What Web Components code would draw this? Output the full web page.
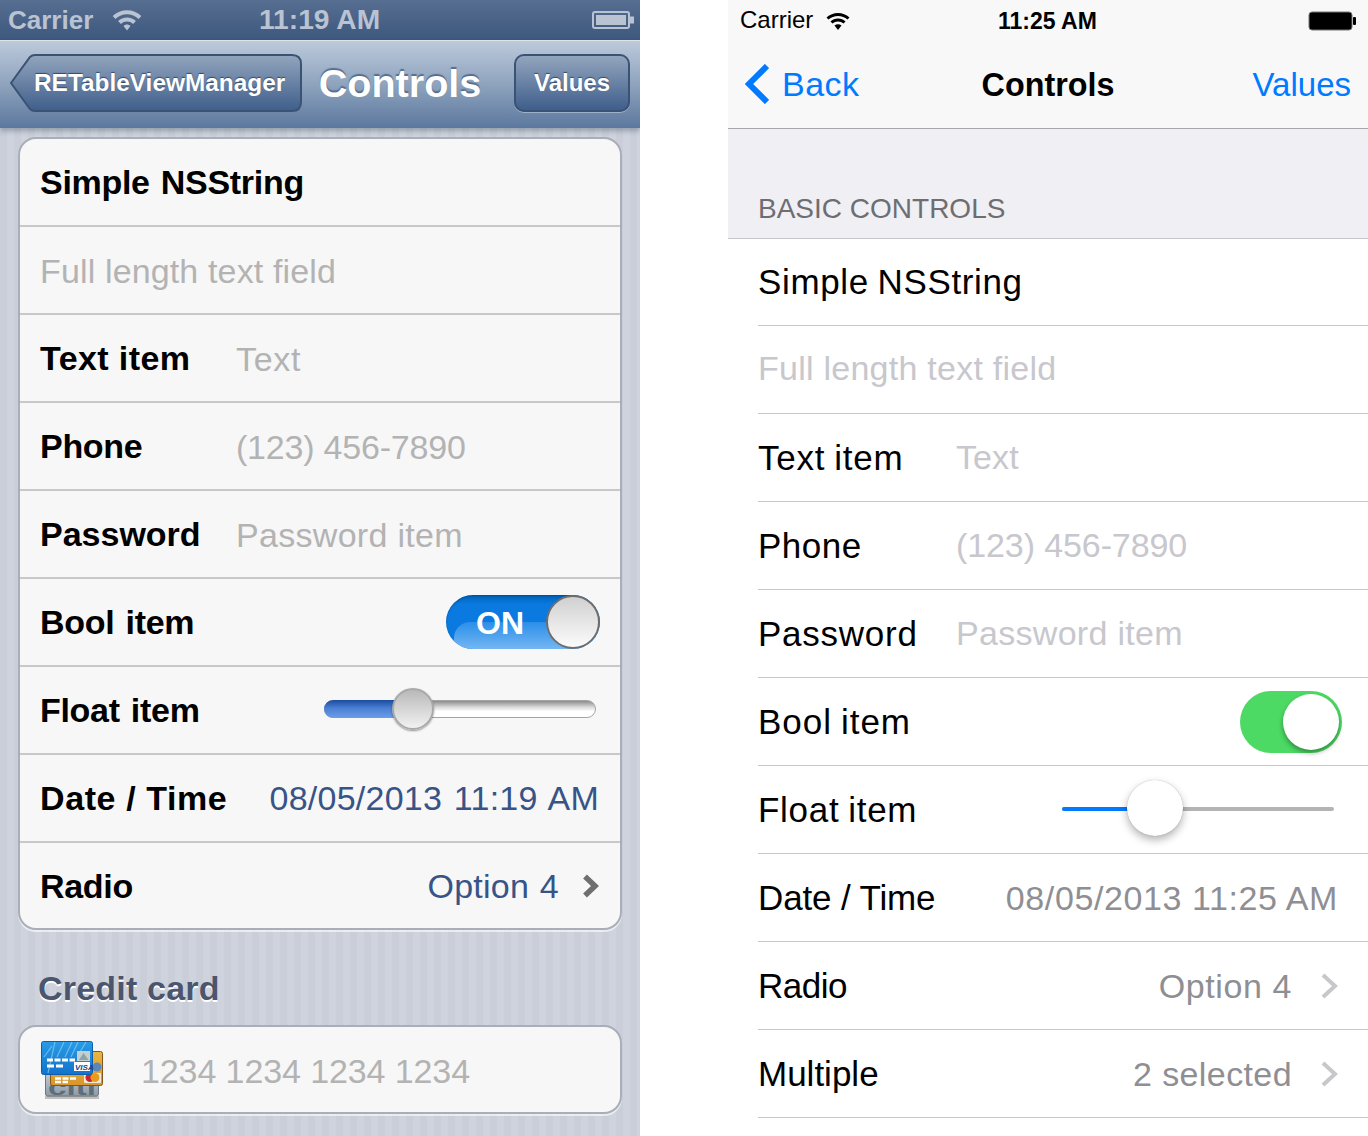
<!DOCTYPE html>
<html>
<head>
<meta charset="utf-8">
<title>Controls</title>
<style>
    html, body { margin: 0; padding: 0; background: #fff; }
    body {
        width: 1368px;
        height: 1136px;
        overflow: hidden;
        display: flex;
        justify-content: space-between;
        font-family: "Liberation Sans", Arial, sans-serif;
    }
</style>
</head>
<body>

<old-phone>
    <old-status slot="top"></old-status>
    <old-nav slot="top"></old-nav>
    <old-group>
        <old-row label="Simple NSString"></old-row>
        <old-row placeholder="Full length text field" style="--ph: .14px"></old-row>
        <old-row label="Text item" placeholder="Text" style="--ls: .4px; --ws: 0; --ph: .7px"></old-row>
        <old-row label="Phone" placeholder="(123) 456-7890" style="--ph: -.2px"></old-row>
        <old-row label="Password" placeholder="Password item" style="--ls: 0; --ph: .3px"></old-row>
        <old-row label="Bool item"><old-switch></old-switch></old-row>
        <old-row label="Float item"><old-slider></old-slider></old-row>
        <old-row label="Date / Time" value="08/05/2013 11:19 AM" style="--ls: .6px; --ws: 0; --vws: 2px"></old-row>
        <old-row label="Radio" value="Option 4" chevron></old-row>
    </old-group>
    <old-header>Credit card</old-header>
    <old-group>
        <old-row card placeholder="1234 1234 1234 1234" style="--ph: -.1px"></old-row>
    </old-group>
</old-phone>

<new-phone>
    <new-status slot="top"></new-status>
    <new-nav slot="top"></new-nav>
    <new-header>BASIC CONTROLS</new-header>
    <new-group>
        <new-row label="Simple NSString" style="--ls: .63px"></new-row>
        <new-row placeholder="Full length text field" style="--ph: .25px; --ph-lift: 4px"></new-row>
        <new-row label="Text item" placeholder="Text" style="--ls: .75px"></new-row>
        <new-row label="Phone" placeholder="(123) 456-7890" style="--ph: -.1px"></new-row>
        <new-row label="Password" placeholder="Password item" style="--ls: .75px; --ph: .3px"></new-row>
        <new-row label="Bool item" style="--ls: .95px"><new-switch></new-switch></new-row>
        <new-row label="Float item" style="--ls: .7px"><new-slider></new-slider></new-row>
        <new-row label="Date / Time" value="08/05/2013 11:25 AM" style="--ls: -.14px; --ws: 0"></new-row>
        <new-row label="Radio" value="Option 4" chevron style="--ls: -.5px"></new-row>
        <new-row label="Multiple" value="2 selected" chevron style="--ls: 0; --vs: .4px"></new-row>
    </new-group>
</new-phone>

<script>
const FONT = '"Liberation Sans", Arial, sans-serif';

function defineElement(name, css, html, setup)
{
    const template = document.createElement('template');
    template.innerHTML = `<style>${css}</style>${html}`;
    customElements.define(name, class extends HTMLElement
    {
        constructor()
        {
            super();
            this.attachShadow({mode: 'open'});
            this.shadowRoot.appendChild(template.content.cloneNode(true));
        }

        connectedCallback()
        {
            if (setup) setup(this, this.shadowRoot);
        }
    });
}

/* ---------- iOS 6 side ---------- */

defineElement('old-phone', `
    :host {
        display: flex;
        flex-direction: column;
        width: 640px;
        height: 1136px;
        overflow: hidden;
        background-color: #cbd0da;
        background-image: repeating-linear-gradient(90deg, #c9ced9 0, #c9ced9 7px, #ced3dd 7px, #ced3dd 14px);
        font-family: ${FONT};
    }
    ::slotted(*) { flex: none; }
    #content { padding: 9px 18px 0; }
`, `<slot name="top"></slot><div id="content"><slot></slot></div>`);

defineElement('old-status', `
    :host {
        display: flex;
        align-items: center;
        box-sizing: border-box;
        height: 41px;
        padding: 0 6px 0 8px;
        background: linear-gradient(#566e90, #3d577e);
        border-bottom: 1px solid #e4e8ee;
        color: #b9c3d2;
        font-weight: bold;
    }
    #carrier { font-size: 26px; width: 104px; }
    svg { display: block; }
    #time { font-size: 28.200px; margin: 0 0 2px 117px; flex: 1; }
`, `
    <span id="carrier">Carrier</span>
    <svg width="30" height="22" viewBox="0 0 30 22"><g fill="none" stroke="#b9c3d2" stroke-width="4"><path d="M2 8.500C9.500 1.500 20.500 1.500 28 8.500"/><path d="M7.500 13.500C11.500 9.500 18.500 9.500 22.500 13.500"/></g><path d="M11.500 17C13.500 15 16.500 15 18.500 17L15 21.500Z" fill="#b9c3d2"/></svg>
    <span id="time">11:19 AM</span>
    <svg width="42" height="18" viewBox="0 0 42 18"><rect x="1" y="1" width="36" height="16" rx="2" fill="none" stroke="#b9c3d2" stroke-width="2"/><rect x="4" y="4" width="30" height="10" fill="#b9c3d2"/><rect x="38" y="5.500" width="4" height="7" fill="#b9c3d2"/></svg>
`);

defineElement('old-nav', `
    :host {
        display: flex;
        align-items: center;
        box-sizing: border-box;
        height: 87px;
        padding: 0 10px 3px;
        background: linear-gradient(#bccadb 0, #8ea3bd 50%, #5c789f 100%);
        box-shadow: 0 3px 5px rgba(50, 60, 80, .35);
        position: relative;
        color: #fff;
        font-weight: bold;
    }
    #back {
        position: relative;
        width: 292px;
        height: 58px;
        display: flex;
        align-items: center;
        box-sizing: border-box;
        padding-left: 24px;
        font-size: 24.400px;
        text-shadow: 0 -1px 1px #33496b;
    }
    #back svg { position: absolute; left: 0; top: 0; }
    #back span { position: relative; }
    #title {
        flex: 1;
        text-align: center;
        padding-right: 16px;
        font-size: 39.600px;
        text-shadow: 0 -2px 1px #556d8f;
    }
    #values {
        width: 116px;
        height: 58px;
        box-sizing: border-box;
        display: flex;
        align-items: center;
        justify-content: center;
        border-radius: 10px;
        border: 2px solid #3a5274;
        background: linear-gradient(#93a5bd, #3f5e8b);
        box-shadow: 0 1px 0 rgba(255, 255, 255, .35);
        font-size: 24px;
        text-shadow: 0 -1px 1px #33496b;
    }
`, `
    <div id="back">
        <svg width="292" height="58" viewBox="0 0 292 58">
            <defs><linearGradient id="bk" x1="0" y1="0" x2="0" y2="1"><stop offset="0" stop-color="#93a5bd"/><stop offset="1" stop-color="#3f5e8b"/></linearGradient></defs>
            <path d="M1 29L20 3Q22 1 25 1H282Q291 1 291 10V48Q291 57 282 57H25Q22 57 20 55Z" fill="url(#bk)" stroke="#3a5274" stroke-width="2"/>
        </svg>
        <span>RETableViewManager</span>
    </div>
    <div id="title">Controls</div>
    <div id="values">Values</div>
`);

defineElement('old-group', `
    :host {
        display: block;
        border: 2px solid #a9aeba;
        border-radius: 18px;
        background: #f7f7f7;
        overflow: hidden;
        box-shadow: 0 2px 0 rgba(255, 255, 255, .6);
    }
`, `<slot></slot>`);

defineElement('old-header', `
    :host {
        display: block;
        height: 95px;
        box-sizing: border-box;
        padding: 38px 0 0 20px;
        font-size: 34px;
        line-height: 40px;
        letter-spacing: .2px;
        font-weight: bold;
        color: #4b566e;
        text-shadow: 0 2px 0 #fff;
    }
`, `<slot></slot>`);

defineElement('old-row', `
    :host {
        display: flex;
        align-items: center;
        box-sizing: border-box;
        height: 88px;
        padding: 0 21px 0 20px;
        border-bottom: 2px solid #c8c8cc;
        font-size: 34px;
    }
    :host(:last-child) { border-bottom: none; height: 85px; padding-top: 1px; }
    #label { font-weight: bold; color: #000; white-space: nowrap; letter-spacing: var(--ls, -.3px); word-spacing: var(--ws, 2px); }
    #label.fixed { width: 196px; flex: none; }
    #placeholder { color: #b3b3b3; white-space: nowrap; margin-top: 2px; letter-spacing: var(--ph, 0); }
    #value { color: #385487; margin-left: auto; white-space: nowrap; letter-spacing: .25px; word-spacing: var(--vws, 1px); }
    #chevron { margin-left: 23px; margin-right: -1px; display: block; }
    #icon { flex: none; width: 101px; display: flex; }
    ::slotted(*) { margin-left: auto; }
`, `
    <div id="icon" hidden></div>
    <span id="label"></span>
    <span id="placeholder"></span>
    <span id="value"></span>
    <slot></slot>
`, (host, root) => {
    const label = host.getAttribute('label');
    const labelEl = root.querySelector('#label');
    labelEl.textContent = label || '';
    if (label && host.hasAttribute('placeholder')) labelEl.classList.add('fixed');
    if (!label) labelEl.remove();
    const ph = root.querySelector('#placeholder');
    ph.textContent = host.getAttribute('placeholder') || '';
    root.querySelector('#value').textContent = host.getAttribute('value') || '';
    const icon = root.querySelector('#icon');
    if (host.hasAttribute('card')) {
        icon.hidden = false;
        icon.appendChild(document.createElement('card-icon'));
    } else {
        icon.remove();
    }
    if (host.hasAttribute('chevron')) {
        root.querySelector('#value').insertAdjacentHTML('afterend',
            '<svg id="chevron" width="18" height="24" viewBox="0 0 18 24"><path d="M3 2.500L13 12L3 21.500" fill="none" stroke="#6f6f6f" stroke-width="5.500"/></svg>');
    }
});

defineElement('old-switch', `
    :host {
        display: block;
        position: relative;
        width: 154px;
        height: 54px;
        margin-right: -1px;
        border-radius: 27px;
        background: linear-gradient(#0063b8 0, #0a7ae0 18%, #0a7ae0 100%);
        overflow: hidden;
        box-shadow: inset 0 1px 2px rgba(0, 40, 90, .4);
        color: #fff;
        font-size: 32px;
        font-weight: bold;
    }
    #gloss {
        position: absolute;
        left: 8px;
        right: 20px;
        top: 27px;
        bottom: 0;
        border-radius: 16px 0 0 0;
        background: linear-gradient(#2a8fea, #74b6f2);
    }
    #on { position: absolute; left: 30px; top: 0; width: 48px; line-height: 56px; text-align: center; }
    #thumb {
        position: absolute;
        right: 0;
        top: 0;
        width: 50px;
        height: 50px;
        border: 2px solid #6e6e6e;
        border-radius: 50%;
        background: linear-gradient(#d0d0d0, #fbfbfb);
    }
`, `<div id="gloss"></div><div id="on">ON</div><div id="thumb"></div>`);

defineElement('old-slider', `
    :host {
        display: block;
        position: relative;
        width: 272px;
        height: 18px;
        margin-right: 3px;
        margin-top: -2px;
        box-sizing: border-box;
        border-radius: 9px;
        border: 1px solid #a4a4a4;
        background: linear-gradient(#8c8c8c 0, #dcdcdc 40%, #fff 65%, #fff 100%);
    }
    #fill {
        position: absolute;
        left: -1px;
        top: -1px;
        bottom: -1px;
        width: 80px;
        border-radius: 9px 0 0 9px;
        background: linear-gradient(#1a4b9e 0, #4a7fd4 45%, #6c9de8 100%);
    }
    #thumb {
        position: absolute;
        left: 67px;
        top: -13px;
        width: 38px;
        height: 38px;
        border: 2px solid #a9a9a9;
        border-radius: 50%;
        background: linear-gradient(#b9b9b9, #f2f2f2);
        box-shadow: 0 1px 2px rgba(0, 0, 0, .4);
    }
`, `<div id="fill"></div><div id="thumb"></div>`);

defineElement('card-icon', `
    :host { display: block; width: 64px; height: 60px; }
    svg { display: block; }
    text { font-family: ${FONT}; font-weight: bold; }
`, `
    <svg width="64" height="60" viewBox="0 0 64 60">
        <defs>
            <linearGradient id="bl" x1="0" y1="0" x2="0" y2="1"><stop offset="0" stop-color="#2a9be6"/><stop offset="1" stop-color="#1273cc"/></linearGradient>
            <linearGradient id="or" x1="0" y1="0" x2="0" y2="1"><stop offset="0" stop-color="#e9b544"/><stop offset="1" stop-color="#d9962a"/></linearGradient>
            <linearGradient id="gr" x1="0" y1="0" x2="0" y2="1"><stop offset="0" stop-color="#c0c9d1"/><stop offset="1" stop-color="#8d9ba7"/></linearGradient>
        </defs>
        <rect x="5.500" y="34" width="53" height="22" rx="2" fill="url(#gr)" stroke="#6b7782"/>
        <text x="8" y="55" font-size="22" fill="#5f6d79" textLength="48" lengthAdjust="spacingAndGlyphs">citi</text>
        <rect x="5" y="56" width="54" height="3" fill="#000" opacity=".22"/>
        <rect x="10.500" y="11.500" width="52" height="34" rx="2" fill="url(#or)" stroke="#85561a"/>
        <path d="M15 38.500H36M15 42H28" stroke="#fff" stroke-width="2.500" stroke-dasharray="6 1.500"/>
        <circle cx="57" cy="27" r="4.500" fill="#5a87b8"/>
        <rect x="44" y="33" width="17" height="10" rx="1" fill="#f1ead8"/>
        <circle cx="50" cy="37.500" r="4.500" fill="#c9262c"/>
        <circle cx="55" cy="37.500" r="4.500" fill="#e99a20"/>
        <rect x="1.500" y="1.500" width="51" height="33" rx="2" fill="url(#bl)" stroke="#0e5eae"/>
        <path d="M15 2L8 33M24 2L17 17M32 2L25 17M38 2L31 17M46 2L40 12M12 6L4 17" stroke="#8ad6f8" stroke-width="1.200" opacity=".65"/>
        <rect x="37" y="11" width="13" height="10" fill="#c3cfd0"/>
        <path d="M39 20l4.500-7 5 7z" fill="#8ea3a8"/>
        <path d="M7 20H35" stroke="#fff" stroke-width="3" stroke-dasharray="6 1.500"/>
        <path d="M7 26H24" stroke="#fff" stroke-width="3" stroke-dasharray="7 2"/>
        <rect x="34" y="22" width="16" height="9" fill="#fff"/>
        <text x="35" y="30" font-size="8" font-style="italic" fill="#23407f">VISA</text>
    </svg>
`);

/* ---------- iOS 7 side ---------- */

defineElement('new-phone', `
    :host {
        display: flex;
        flex-direction: column;
        width: 640px;
        height: 1136px;
        overflow: hidden;
        background: #efeff4;
        font-family: ${FONT};
    }
    ::slotted(*) { flex: none; }
`, `<slot name="top"></slot><slot></slot>`);

defineElement('new-status', `
    :host {
        display: flex;
        align-items: center;
        box-sizing: border-box;
        height: 40px;
        padding: 2px 12px 0;
        background: #f8f8f8;
        color: #000;
        font-size: 24px;
    }
    #carrier { width: 87px; margin-bottom: 2px; }
    svg { display: block; margin-left: -1px; }
    #time { font-weight: bold; font-size: 23px; margin-left: 148px; flex: 1; }
`, `
    <span id="carrier">Carrier</span>
    <svg width="24" height="19" viewBox="0 0 24 19"><g fill="none" stroke="#000" stroke-width="3"><path d="M1.500 6.500C7.500 1 16.500 1 22.500 6.500"/><path d="M5.500 10.500C9 7 15 7 18.500 10.500"/></g><path d="M8.500 13.500C10.500 11.700 13.500 11.700 15.500 13.500L12 18Z"/></svg>
    <span id="time">11:25 AM</span>
    <svg width="48" height="20" viewBox="0 0 48 20"><rect x="1" y="1" width="43" height="18" rx="3" fill="#000" stroke="#777" stroke-width="1"/><rect x="45" y="6" width="3" height="8" rx="1" fill="#000"/></svg>
`);

defineElement('new-nav', `
    :host {
        display: grid;
        grid-template-columns: 1fr auto 1fr;
        align-items: center;
        box-sizing: border-box;
        height: 89px;
        padding: 0 17px;
        background: #f8f8f8;
        border-bottom: 1px solid #a7a7aa;
        color: #007aff;
        font-size: 34px;
    }
    #back { display: flex; align-items: center; gap: 13px; letter-spacing: .5px; }
    #title { color: #000; font-weight: bold; font-size: 32.300px; margin-top: 2px; letter-spacing: 0; }
    #values { justify-self: end; font-size: 33px; margin-top: 2px; }
    svg { display: block; }
`, `
    <div id="back">
        <svg width="24" height="40" viewBox="0 0 24 40"><path d="M22 2L4 20L22 38" fill="none" stroke="#007aff" stroke-width="6"/></svg>
        <span>Back</span>
    </div>
    <div id="title">Controls</div>
    <div id="values">Values</div>
`);

defineElement('new-header', `
    :host {
        display: flex;
        align-items: flex-end;
        box-sizing: border-box;
        height: 109px;
        padding: 0 30px 13px;
        color: #6d6d72;
        font-size: 28px;
        line-height: 32px;
    }
`, `<slot></slot>`);

defineElement('new-group', `
    :host {
        display: block;
        background: #fff;
        box-shadow: inset 0 1px 0 #c8c7cc;
        padding-bottom: 40px;
    }
`, `<slot></slot>`);

defineElement('new-row', `
    :host { display: block; padding-left: 30px; font-size: 35px; }
    #line {
        display: flex;
        align-items: center;
        box-sizing: border-box;
        height: 88px;
        padding: 1px 30px 0 0;
        border-bottom: 1px solid #c8c7cc;
    }
    #label { color: #000; white-space: nowrap; letter-spacing: var(--ls, .5px); word-spacing: var(--ws, -1.500px); }
    #label.fixed { width: 198px; flex: none; }
    #placeholder {
        color: #c7c7cd;
        white-space: nowrap;
        font-size: 34px;
        letter-spacing: var(--ph, .1px);
        margin-bottom: var(--ph-lift, 2px);
    }
    #value { color: #8e8e93; margin-left: auto; white-space: nowrap; font-size: 34px; letter-spacing: var(--vs, .6px); }
    #chevron { margin-left: 29px; display: block; }
    ::slotted(*) { margin-left: auto; }
`, `
    <div id="line">
        <span id="label"></span>
        <span id="placeholder"></span>
        <span id="value"></span>
        <slot></slot>
    </div>
`, (host, root) => {
    const label = host.getAttribute('label');
    const labelEl = root.querySelector('#label');
    labelEl.textContent = label || '';
    if (label && host.hasAttribute('placeholder')) labelEl.classList.add('fixed');
    if (!label) labelEl.remove();
    root.querySelector('#placeholder').textContent = host.getAttribute('placeholder') || '';
    root.querySelector('#value').textContent = host.getAttribute('value') || '';
    if (host.hasAttribute('chevron')) {
        root.querySelector('#value').insertAdjacentHTML('afterend',
            '<svg id="chevron" width="17" height="26" viewBox="0 0 17 26"><path d="M2 2L14 13L2 24" fill="none" stroke="#c7c7cc" stroke-width="4"/></svg>');
    }
});

defineElement('new-switch', `
    :host {
        display: block;
        position: relative;
        width: 102px;
        height: 62px;
        border-radius: 31px;
        background: #4cd964;
        margin-right: -4px;
    }
    #thumb {
        position: absolute;
        right: 3px;
        top: 3px;
        width: 56px;
        height: 56px;
        border-radius: 50%;
        background: #fff;
        box-shadow: 0 3px 5px rgba(0, 0, 0, .35);
    }
`, `<div id="thumb"></div>`);

defineElement('new-slider', `
    :host {
        display: block;
        position: relative;
        width: 272px;
        height: 4px;
        margin-right: 4px;
        margin-top: -2px;
        border-radius: 2px;
        background: #b4b4b4;
    }
    #fill {
        position: absolute;
        left: 0;
        top: 0;
        bottom: 0;
        width: 70px;
        border-radius: 2px 0 0 2px;
        background: #007aff;
    }
    #thumb {
        position: absolute;
        left: 65px;
        top: -27px;
        width: 56px;
        height: 56px;
        border-radius: 50%;
        background: #fff;
        box-shadow: 0 0 1px rgba(0, 0, 0, .3), 0 4px 8px rgba(0, 0, 0, .3);
    }
`, `<div id="fill"></div><div id="thumb"></div>`);
</script>
</body>
</html>
